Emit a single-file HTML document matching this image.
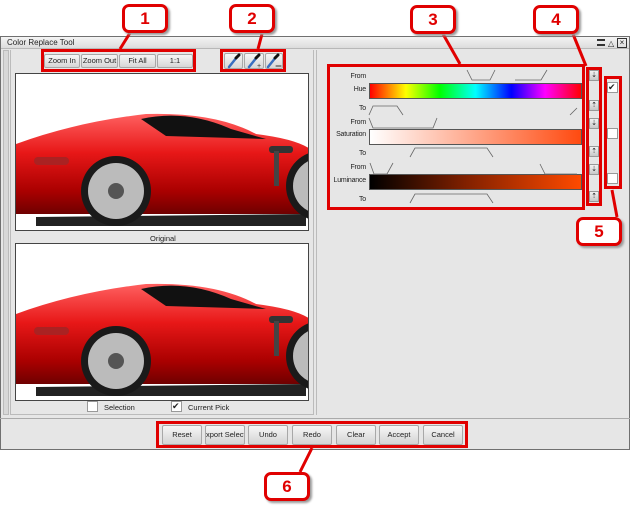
<!DOCTYPE html>
<html><head><meta charset="utf-8"><style>
*{margin:0;padding:0;box-sizing:border-box}
body{width:630px;height:508px;background:#fff;position:relative;overflow:hidden;font-family:"Liberation Sans",sans-serif;font-size:8px;color:#222}
.a{position:absolute}
.win{left:0;top:36px;width:630px;height:414px;background:#e6e6e6;border:1px solid #707070}
.title{left:1px;top:37px;width:628px;height:12px;background:linear-gradient(#f4f4f4,#dcdcdc);border-bottom:1px solid #b8b8b8;font-size:8px;padding-left:6px;line-height:12px}
.btn{position:absolute;height:14px;background:linear-gradient(#f6f6f6,#d6d6d6);border:1px solid #a8a8a8;border-radius:2px;font-size:7.5px;text-align:center;line-height:12px;overflow:hidden;white-space:nowrap}
.bb{position:absolute;height:20px;background:linear-gradient(#f6f6f6,#d4d4d4);border:1px solid #a8a8a8;border-radius:2px;font-size:7.5px;text-align:center;line-height:18px;overflow:hidden;white-space:nowrap;top:425px}
.img{position:absolute;background:#fff;border:1px solid #444;overflow:hidden}
.rb{position:absolute;border:3px solid #e00000}
.co{position:absolute;width:46px;height:29px;background:#fff;border:3px solid #e00000;border-radius:7px;color:#e00000;font-weight:bold;font-size:17px;text-align:center;line-height:23px;box-shadow:2px 2px 2px #999}
.lbl{position:absolute;font-size:7px;letter-spacing:-0.2px;text-align:right;width:36px;left:330px;white-space:nowrap}
.bar{position:absolute;left:369px;width:213px;height:16px;border:1px solid #555}
.ab{position:absolute;left:589px;width:10px;height:11px;background:linear-gradient(#f2f2f2,#c8c8c8);border:1px solid #999;font-size:7px;line-height:9px;text-align:center}
.cb{position:absolute;left:607px;width:11px;height:11px;background:#fff;border:1px solid #999}
</style></head><body>
<div class="a win"></div>
<div class="a title">Color Replace Tool</div>
<div class="a" style="left:597px;top:39px;width:8px;height:7px;border-top:2px solid #333;border-bottom:2px solid #333"></div>
<div class="a" style="left:608px;top:39px;font-size:8px">△</div>
<div class="a" style="left:617px;top:38px;width:10px;height:10px;border:1px solid #333;font-size:8px;line-height:8px;text-align:center">×</div>
<div class="a" style="left:3px;top:50px;width:6px;height:365px;background:#d8d8d8;border:1px solid #bbb"></div>
<div class="a" style="left:10px;top:50px;width:304px;height:365px;border:1px solid #bbb;border-top:none"></div>
<div class="a" style="left:316px;top:50px;width:1px;height:365px;background:#bbb"></div>
<div class="a" style="left:0;top:418px;width:630px;height:1px;background:#aaa"></div>
<div class="btn" style="left:44px;top:54px;width:36px">Zoom In</div>
<div class="btn" style="left:81px;top:54px;width:37px">Zoom Out</div>
<div class="btn" style="left:119px;top:54px;width:37px">Fit All</div>
<div class="btn" style="left:157px;top:54px;width:36px">1:1</div>
<div class="btn" style="left:224px;top:53px;width:19px;height:16px"></div>
<div class="btn" style="left:244px;top:53px;width:20px;height:16px"></div>
<div class="btn" style="left:265px;top:53px;width:18px;height:16px"></div>
<svg class="a" style="left:224px;top:53px" width="60" height="16"><g stroke-linecap="round"><line x1="5" y1="14" x2="13" y2="4" stroke="#3a6fc0" stroke-width="2.5"/><line x1="12" y1="5" x2="15" y2="2" stroke="#111" stroke-width="3"/><line x1="25" y1="14" x2="33" y2="4" stroke="#3a6fc0" stroke-width="2.5"/><line x1="32" y1="5" x2="35" y2="2" stroke="#111" stroke-width="3"/><text x="33" y="15" font-size="7" fill="#333">+</text><line x1="44" y1="14" x2="52" y2="4" stroke="#3a6fc0" stroke-width="2.5"/><line x1="51" y1="5" x2="54" y2="2" stroke="#111" stroke-width="3"/><line x1="52" y1="13" x2="57" y2="13" stroke="#333"/></g></svg>
<svg width="0" height="0" style="position:absolute"><defs><linearGradient id="g" x1="0" y1="0" x2="0" y2="1"><stop offset="0" stop-color="#ff6060"/><stop offset=".35" stop-color="#e81818"/><stop offset=".7" stop-color="#a00"/><stop offset="1" stop-color="#500"/></linearGradient>
<g id="car"><path d="M0,70 Q60,48 130,40 Q200,38 240,60 Q280,65 294,75 L294,148 L0,150Z" fill="url(#g)"/>
<path d="M125,45 Q170,35 215,55 L250,65 L150,62Z" fill="#111"/>
<path d="M0,140 L294,140 L294,158 L0,158Z" fill="#fff"/>
<path d="M20,143 L290,140 L290,152 L20,152Z" fill="#222"/>
<circle cx="100" cy="117" r="35" fill="#1a1a1a"/><circle cx="100" cy="117" r="28" fill="#bbb"/><circle cx="100" cy="117" r="8" fill="#555"/>
<circle cx="305" cy="112" r="35" fill="#1a1a1a"/><circle cx="305" cy="112" r="28" fill="#bbb"/>
<rect x="253" y="72" width="24" height="7" rx="3" fill="#333"/><rect x="258" y="77" width="5" height="35" fill="#444"/>
<rect x="18" y="83" width="35" height="8" rx="4" fill="#a22"/></g></defs></svg>
<div class="img" style="left:15px;top:73px;width:294px;height:158px"><svg width="294" height="158"><use href="#car"/></svg></div>
<div class="a" style="left:150px;top:234px;font-size:7.5px">Original</div>
<div class="img" style="left:15px;top:243px;width:294px;height:158px"><svg width="294" height="158"><use href="#car"/></svg></div>
<div class="a" style="left:87px;top:401px;width:11px;height:11px;background:#fff;border:1px solid #999"></div>
<div class="a" style="left:104px;top:403px;font-size:7.5px">Selection</div>
<div class="a" style="left:171px;top:401px;width:11px;height:11px;background:#fff;border:1px solid #999;font-size:9px;line-height:9px">✔</div>
<div class="a" style="left:188px;top:403px;font-size:7.5px">Current Pick</div>
<div class="lbl" style="top:73px">From</div>
<div class="lbl" style="top:86px">Hue</div>
<div class="lbl" style="top:105px">To</div>
<div class="bar" style="top:83px;background:linear-gradient(90deg,#f00,#ff0 17%,#0f0 33%,#0ff 50%,#00f 67%,#f0f 83%,#f00)"></div>
<div class="lbl" style="top:119px">From</div>
<div class="lbl" style="top:131px">Saturation</div>
<div class="lbl" style="top:150px">To</div>
<div class="bar" style="top:129px;background:linear-gradient(90deg,#fff,#ff4a10)"></div>
<div class="lbl" style="top:164px">From</div>
<div class="lbl" style="top:177px">Luminance</div>
<div class="lbl" style="top:196px">To</div>
<div class="bar" style="top:174px;background:linear-gradient(90deg,#000,#802000 45%,#ff4a00)"></div>
<svg class="a" style="left:365px;top:68px" width="220" height="140" fill="none" stroke="#666" stroke-width=".8">
<path d="M102,2 L107,12 L125,12 L130,2 M150,12 L176,12 L182,2"/>
<path d="M4,47 L8,38 L32,38 L38,47 M212,40 L205,47"/>
<path d="M4,50 L8,60 L68,60 L72,50"/>
<path d="M5,95 L9,106 L22,106 L28,95"/>
<path d="M45,135 L50,126 L122,126 L128,135"/>
<path d="M45,89 L50,80 L122,80 L128,89"/>
<path d="M175,96 L180,106 L212,106"/>
</svg>
<div class="ab" style="top:70px">⇣</div>
<div class="ab" style="top:100px">⇡</div>
<div class="ab" style="top:118px">⇣</div>
<div class="ab" style="top:146px">⇡</div>
<div class="ab" style="top:164px">⇣</div>
<div class="ab" style="top:191px">⇡</div>
<div class="cb" style="top:82px;font-size:9px;line-height:9px">✔</div>
<div class="cb" style="top:128px"></div>
<div class="cb" style="top:173px"></div>
<div class="bb" style="left:162px;width:40px">Reset</div>
<div class="bb" style="left:205px;width:40px">xport Selectio</div>
<div class="bb" style="left:248px;width:40px">Undo</div>
<div class="bb" style="left:292px;width:40px">Redo</div>
<div class="bb" style="left:336px;width:40px">Clear</div>
<div class="bb" style="left:379px;width:40px">Accept</div>
<div class="bb" style="left:423px;width:40px">Cancel</div>
<div class="rb" style="left:41px;top:49px;width:155px;height:23px"></div>
<div class="rb" style="left:220px;top:49px;width:66px;height:23px"></div>
<div class="rb" style="left:327px;top:64px;width:258px;height:146px"></div>
<div class="rb" style="left:586px;top:67px;width:16px;height:139px"></div>
<div class="rb" style="left:604px;top:76px;width:18px;height:113px"></div>
<div class="rb" style="left:156px;top:421px;width:312px;height:27px"></div>
<svg class="a" style="left:0;top:0" width="630" height="508" stroke="#e00000" stroke-width="3" fill="none">
<path d="M130,33 L120,49 M262,34 L258,49 M443,34 L460,64 M573,34 L586,66 M617,217 L612,190 M300,472 L312,448"/></svg>
<div class="co" style="left:122px;top:4px">1</div>
<div class="co" style="left:229px;top:4px">2</div>
<div class="co" style="left:410px;top:5px">3</div>
<div class="co" style="left:533px;top:5px">4</div>
<div class="co" style="left:576px;top:217px">5</div>
<div class="co" style="left:264px;top:472px">6</div>
</body></html>
